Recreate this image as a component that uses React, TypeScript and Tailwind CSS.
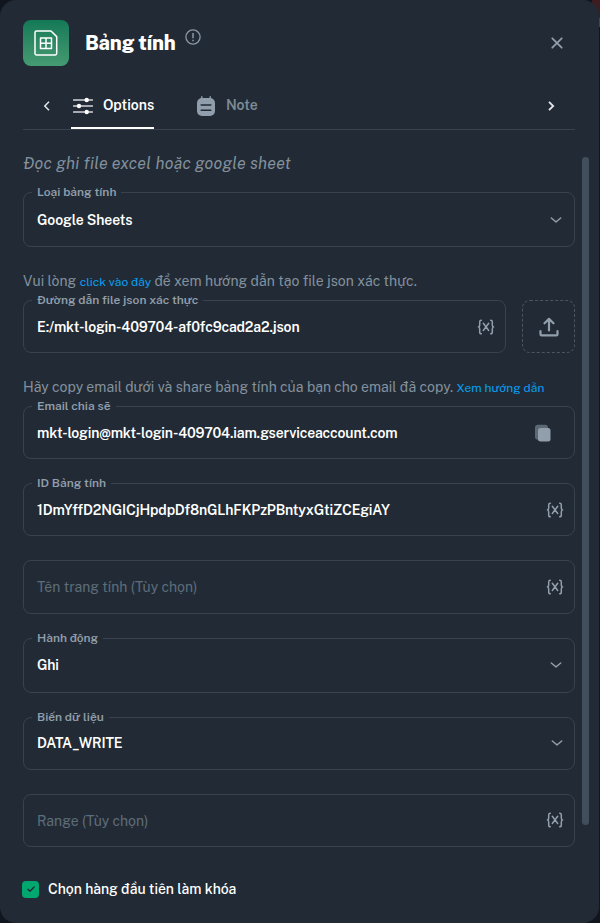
import type { ReactNode } from 'react';

function VariableIcon() {
  return (
    <svg className="h-[16px] w-[18px] shrink-0" viewBox="0 0 18 16" fill="none" stroke="#919eab" strokeWidth="1.500" strokeLinecap="round" strokeLinejoin="round">
      <path d="M4.300 1.200C3.200 1.200 2.700 1.700 2.700 2.900v3c0 1.200-.4 1.700-1.200 2 .8.3 1.200.8 1.200 2v3c0 1.300.5 1.900 1.600 1.900M13.700 1.200c1.100 0 1.600.5 1.600 1.700v3c0 1.200.4 1.700 1.200 2-.8.3-1.200.8-1.200 2v3c0 1.300-.5 1.900-1.600 1.900M6.300 4.300l5.400 7.200M11.700 4.300l-5.400 7.200" />
    </svg>
  );
}

function ChevronDown() {
  return (
    <svg className="h-[8px] w-[12px] shrink-0" viewBox="0 0 12 8" fill="none" stroke="#919eab" strokeWidth="1.500" strokeLinecap="round" strokeLinejoin="round">
      <path d="M1.300 2l3.900 3.300c.5.400 1.100.400 1.600 0L10.700 2" />
    </svg>
  );
}

function CopyIcon() {
  return (
    <svg className="h-[18px] w-[16px] shrink-0" viewBox="0 0 16 18">
      <rect x="0" y="0.800" width="13" height="15" rx="3" fill="#5c6874" />
      <rect x="3" y="4" width="12.500" height="13.500" rx="2.500" fill="#919eab" />
    </svg>
  );
}

type FieldProps = {
  className: string;
  label?: string;
  labelClass?: string;
  value?: string;
  valueClass?: string;
  placeholder?: string;
  icon: ReactNode;
};

function Field({ className, label, labelClass = '', value, valueClass = '', placeholder, icon }: FieldProps) {
  return (
    <div className={`relative flex items-center justify-between rounded-lg border border-[#38434d] pl-[13px] ${className}`}>
      {label && (
        <span className={`absolute -top-[9px] left-[8px] bg-[#222b35] px-[5px] text-[12px] font-semibold leading-[16px] whitespace-nowrap text-[#919eab] ${labelClass}`}>
          {label}
        </span>
      )}
      {value ? (
        <span className={`text-[14px] leading-[20px] font-semibold whitespace-nowrap text-white ${valueClass}`}>{value}</span>
      ) : (
        <span className={`text-[14px] leading-[20px] whitespace-nowrap text-[#5e6d7a] ${valueClass}`}>{placeholder}</span>
      )}
      {icon}
    </div>
  );
}

export default function App() {
  return (
    <div className="relative h-[923px] w-[600px] overflow-hidden bg-[#10151e] font-['Public_Sans','Inter','Noto_Sans',sans-serif]">
      <div className="absolute top-0 right-0 h-[18px] w-[8px] bg-[#3d1d22]" />
      <div className="absolute top-[18px] right-0 h-[9px] w-px bg-[#3a4650]" />
      <div className="relative flex h-[923px] w-[599px] flex-col rounded-2xl bg-[#222b35] pr-[24px] pl-[23px]">
        <header className="mt-[20px] flex h-[46px] items-center">
          <div className="flex h-[46px] w-[46px] items-center justify-center rounded-lg bg-linear-to-b from-[#127957] to-[#459b72]">
            <svg className="h-[26px] w-[24px]" viewBox="0 0 24 26" fill="none" stroke="#fff" strokeWidth="1.500" strokeLinejoin="round">
              <path d="M2.500 1h14.500l5.700 5.600v16.900a1.500 1.500 0 0 1-1.500 1.500H2.500A1.500 1.500 0 0 1 1 23.500v-21A1.500 1.500 0 0 1 2.500 1z" />
              <path d="M6.500 8h11v10.500h-11zM12 8v10.500M6.500 13.200h11" />
            </svg>
          </div>
          <h1 className="ml-[16px] w-[91px] text-[20px] leading-[30px] font-extrabold tracking-[-0.2px] whitespace-nowrap text-white">Bảng tính</h1>
          <svg className="mb-[12px] ml-[9px] h-[16px] w-[16px]" viewBox="0 0 16 16" fill="none" stroke="#8b98a5" strokeWidth="1.300">
            <circle cx="8" cy="8" r="7.100" />
            <path d="M8 4v5.200M8 10.700v1.500" strokeWidth="1.500" />
          </svg>
          <svg className="mr-[12px] ml-auto h-[12px] w-[12px]" viewBox="0 0 12 12" stroke="#919eab" strokeWidth="1.800" strokeLinecap="round">
            <path d="M1.300 1.300l9.400 9.400M10.700 1.300l-9.400 9.400" />
          </svg>
        </header>

        <nav className="mt-[16px] flex h-[48px] items-center border-b border-[#38434d]">
          <svg className="ml-[20px] h-[10px] w-[8px]" viewBox="0 0 8 10" fill="none" stroke="#e3e6e8" strokeWidth="1.500">
            <path d="M6 .8L1.800 5 6 9.200" />
          </svg>
          <div className="mb-px ml-[20px] flex h-[48px] w-[83px] items-center border-b-2 border-white">
            <svg className="mt-[4px] ml-[2px] h-[18px] w-[20px] shrink-0" viewBox="0 0 20 18" fill="#fff">
              <path d="M.7 3h18.600M.7 9h18.600M.7 15h18.600" stroke="#d5d8dc" strokeWidth="1.700" strokeLinecap="round" />
              <circle cx="13.700" cy="3" r="2.200" />
              <circle cx="6" cy="9" r="2.200" />
              <circle cx="13.700" cy="15" r="2.200" />
            </svg>
            <span className="mt-[2px] ml-[10px] text-[14px] leading-[20px] font-semibold whitespace-nowrap text-white">Options</span>
          </div>
          <svg className="ml-[43px] h-[20px] w-[18px]" viewBox="0 0 18 20">
            <rect y="2" width="18" height="18" rx="5" fill="#919eab" />
            <path d="M4.800.7v3M13.200.7v3" stroke="#919eab" strokeWidth="1.400" strokeLinecap="round" />
            <path d="M4.200 9h9.600M4.200 14.300h9.600" stroke="#222b35" strokeWidth="1.600" strokeLinecap="round" />
          </svg>
          <span className="mb-px ml-[11px] text-[14px] leading-[20px] font-semibold text-[#7f8b97]">Note</span>
          <svg className="mr-[20px] ml-auto h-[10px] w-[8px]" viewBox="0 0 8 10" fill="none" stroke="#e3e6e8" strokeWidth="1.800">
            <path d="M2 .8L6.200 5 2 9.200" />
          </svg>
        </nav>

        <main className="flex flex-col">
          <p className="mt-[22px] h-[24px] text-[16px] leading-[24px] whitespace-nowrap text-[#84919e] italic tracking-[0.27px]">Đọc ghi file excel hoặc google sheet</p>
          <Field className="mt-[16px] h-[55px] pr-[12px]" label="Loại bảng tính" value="Google Sheets" valueClass="tracking-[-0.1px]" icon={<ChevronDown />} />

          <p className="mt-[24px] h-[20px] text-[14px] leading-[20px] tracking-[0.02px] whitespace-nowrap text-[#84919e]">
            Vui lòng <a className="text-[12px] text-[#06a0f2]">click vào đây</a> để xem hướng dẫn tạo file json xác thực.
          </p>
          <div className="mt-[9px] flex h-[53px] justify-between">
            <Field className="h-[53px] w-[483px] pr-[10px]" label="Đường dẫn file json xác thực" value="E:/mkt-login-409704-af0fc9cad2a2.json" valueClass="tracking-[-0.165px]" icon={<VariableIcon />} />
            <div className="flex w-[53px] items-center justify-center rounded-lg border border-dashed border-[#4a5661]">
              <svg className="h-[20px] w-[20px]" viewBox="0 0 20 20" fill="none" stroke="#919eab" strokeWidth="2.200" strokeLinecap="round" strokeLinejoin="round">
                <path d="M10 13.500V2.500M5.500 6.300L10 1.900 14.500 6.300M1.500 14v3.200c0 .7.500 1.200 1.200 1.200h14.600c.7 0 1.200-.5 1.200-1.200V14" />
              </svg>
            </div>
          </div>

          <p className="mt-[24px] h-[20px] text-[14px] leading-[20px] tracking-[0.015px] whitespace-nowrap text-[#84919e]">
            Hãy copy email dưới và share bảng tính của bạn cho email đã copy. <a className="text-[12px] text-[#06a0f2]">Xem hướng dẫn</a>
          </p>
          <Field className="mt-[9px] h-[53px] pr-[23px]" label="Email chia sẽ" value="mkt-login@mkt-login-409704.iam.gserviceaccount.com" valueClass="tracking-[-0.155px]" icon={<CopyIcon />} />
          <Field className="mt-[24px] h-[53px] pr-[10px]" label="ID Bảng tính" value="1DmYffD2NGICjHpdpDf8nGLhFKPzPBntyxGtiZCEgiAY" valueClass="tracking-[-0.16px]" icon={<VariableIcon />} />
          <Field className="mt-[24px] h-[54px] pr-[10px]" placeholder="Tên trang tính (Tùy chọn)" icon={<VariableIcon />} />
          <Field className="mt-[24px] h-[55px] pr-[12px] pb-[1px]" label="Hành động" value="Ghi" valueClass="tracking-[-0.2px]" icon={<ChevronDown />} />
          <Field className="mt-[24px] h-[53px] pr-[11px] pb-[2px]" label="Biến dữ liệu" value="DATA_WRITE" valueClass="tracking-[-0.16px]" icon={<ChevronDown />} />
          <Field className="mt-[24px] h-[53px] pr-[10px]" placeholder="Range (Tùy chọn)" icon={<div className="pb-[2px]"><VariableIcon /></div>} />

          <label className="mt-[32px] -ml-px flex h-[20px] items-center">
            <span className="flex h-[17px] w-[17px] items-center justify-center rounded-[4px] bg-[#00a76f]">
              <svg className="h-[8px] w-[8px]" viewBox="0 0 8 8" fill="none" stroke="#212b36" strokeWidth="1.300" strokeLinecap="round" strokeLinejoin="round">
                <path d="M.9 4.200L3 6.300 7.100 2" />
              </svg>
            </span>
            <span className="ml-[9px] text-[14px] leading-[20px] font-medium tracking-[-0.03px] whitespace-nowrap text-white">Chọn hàng đầu tiên làm khóa</span>
          </label>
        </main>
        <div className="absolute top-[157px] right-[10px] h-[668px] w-[7px] rounded-full bg-[#414e5b]" />
      </div>
    </div>
  );
}
